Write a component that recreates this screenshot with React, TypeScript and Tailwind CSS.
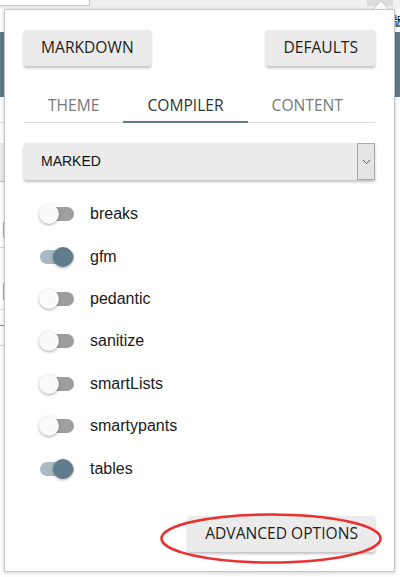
import React, { useState } from "react";

const ui = { fontFamily: '"Open Sans", "Noto Sans", sans-serif' };
const arial = { fontFamily: '"Liberation Sans", Arial, sans-serif' };

const options = [
  { name: "breaks", on: false },
  { name: "gfm", on: true },
  { name: "pedantic", on: false },
  { name: "sanitize", on: false },
  { name: "smartLists", on: false },
  { name: "smartypants", on: false },
  { name: "tables", on: true },
];

function Toggle({ on }: { on: boolean }) {
  return (
    <div className="relative w-[34px] h-[20px]">
      <div className={`absolute left-0 top-[3px] h-[14px] w-[34px] rounded-full ${on ? "bg-[#a8bac3]" : "bg-[#9e9e9e]"}`} />
      <div
        className={`absolute top-0 h-[20px] w-[20px] rounded-full shadow-[0_1px_3px_rgba(0,0,0,0.35)] ${
          on ? "left-[13px] bg-[#5f7d8c]" : "left-[-1px] bg-[#fafafa]"
        }`}
      />
    </div>
  );
}

function FlatButton({ children }: { children: React.ReactNode }) {
  return (
    <button
      className="h-[36px] px-[17px] bg-[#ebebeb] text-[15.6px] text-[#1e1e1e] rounded-[2px] shadow-[0_2px_3px_rgba(0,0,0,0.25)]"
      style={ui}
    >
      {children}
    </button>
  );
}

export default function App() {
  const [tab] = useState("COMPILER");

  return (
    <div className="relative w-[400px] h-[577px] overflow-hidden bg-white">
      {/* page behind the popup */}
      <div className="flex flex-col">
        <div className="h-[9px] bg-[#f0f0f0] flex justify-between">
          <div className="w-[90px] h-[6px] bg-white border-r border-b border-[#c4c4c4]" />
          <div className="w-[26px] h-[6px] mr-[7px] bg-[#dcdcdc]" />
        </div>
        <div className="h-[23px] flex justify-end items-center">
          <span className="text-[12px] text-black mr-[-4px]" style={{ fontFamily: '"Noto Sans CJK SC", sans-serif' }}>
            版
          </span>
        </div>
        <div className="h-[65px] bg-[#5e7b89]" />
        <div className="flex flex-col w-[6px]">
          <div className="h-[26px] border-b border-[#d8d8d8]" />
          <div className="h-[20px]" />
          <div className="h-[39px] bg-[#ececec] border-b border-[#bdbdbd]" />
          <div className="h-[40px]" />
          <div className="h-[16px] border-r-[3px] border-[#9fb4e0]" />
          <div className="h-[10px] border-b border-[#d8d8d8]" />
          <div className="h-[35px]" />
          <div className="h-[17px] border-r-[3px] border-[#9fb4e0]" />
          <div className="h-[10px] border-b border-[#d8d8d8]" />
          <div className="h-[16px] border-b border-[#8a8a8a]" />
          <div className="h-[20px] border-b border-[#d8d8d8]" />
        </div>
      </div>

      {/* popup arrow */}
      <svg className="absolute left-[372px] top-0" width="18" height="10" viewBox="0 0 18 10">
        <path d="M0 10 L9 1 L18 10 Z" fill="#ffffff" stroke="#c8c8c8" strokeWidth="1" />
        <path d="M1 10.5 L17 10.5" stroke="#ffffff" strokeWidth="2" />
      </svg>

      {/* settings popup */}
      <div className="absolute left-[4px] top-[9px] w-[391px] h-[563px] bg-white border border-[#c6c6c6] shadow-[0_1px_4px_rgba(0,0,0,0.2)] px-[19px] pt-[20px] flex flex-col">
        <div className="flex justify-between">
          <FlatButton>MARKDOWN</FlatButton>
          <FlatButton>DEFAULTS</FlatButton>
        </div>

        <div className="mt-[20px] flex border-b border-[#dddddd]" style={ui}>
          {["THEME", "COMPILER", "CONTENT"].map((t) => (
            <div
              key={t}
              className={`px-[24px] pt-[9px] pb-[6px] text-[15.6px] leading-[20px] ${
                t === tab ? "text-[#333333] border-b-2 border-[#5f7d8c] -mb-px" : "text-[#7a7a7a] border-b border-transparent"
              }`}
            >
              {t}
            </div>
          ))}
        </div>

        <div className="mt-[20px] h-[37px] flex items-center bg-[#ebebeb] shadow-[0_2px_3px_rgba(0,0,0,0.25)] rounded-[2px]">
          <span className="flex-1 pl-[17px] text-[14px] text-[#111111]" style={arial}>
            MARKED
          </span>
          <div className="w-[18px] h-full border border-[#a9a9a9] bg-[#e4e4e4] flex items-center justify-center">
            <svg width="9" height="6" viewBox="0 0 9 6">
              <path d="M1 1 L4.5 4.5 L8 1" fill="none" stroke="#555" strokeWidth="1" />
            </svg>
          </div>
        </div>

        <div className="mt-[13px] flex flex-col">
          {options.map((o) => (
            <div key={o.name} className="h-[42.4px] flex items-center pl-[16px] gap-[16px]">
              <Toggle on={o.on} />
              <span className="text-[16px] text-[#1a1a1a]" style={arial}>
                {o.name}
              </span>
            </div>
          ))}
        </div>

        <div className="mt-auto mb-[19px] flex justify-end">
          <div className="relative">
            <FlatButton>ADVANCED OPTIONS</FlatButton>
            <svg className="absolute left-[-30px] top-[-5px] pointer-events-none" width="226" height="56" viewBox="0 0 226 56">
              <ellipse cx="113" cy="27.5" rx="109.5" ry="24" fill="none" stroke="#ec2f2f" strokeWidth="2.6" />
            </svg>
          </div>
        </div>
      </div>
    </div>
  );
}
